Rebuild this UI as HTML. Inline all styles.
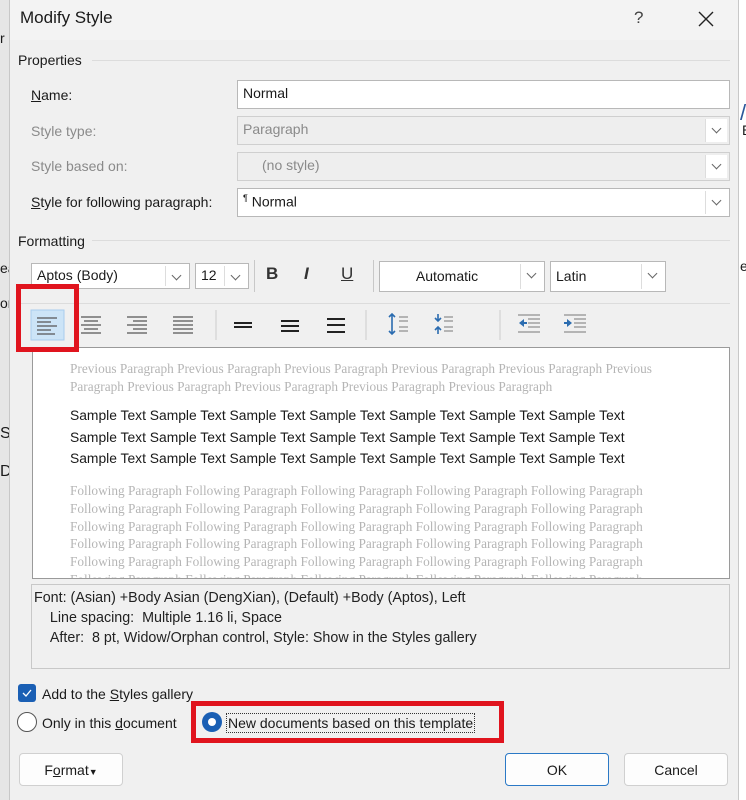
<!DOCTYPE html>
<html><head><style>
*{box-sizing:border-box;margin:0;padding:0}
body{width:746px;height:800px;overflow:hidden;background:#fff;font-family:"Liberation Sans",sans-serif;font-size:14px;color:#1a1a1a;position:relative}
.a{position:absolute}
.dlg{left:9px;top:0;width:730px;height:800px;background:#f0f0f0;border-left:1px solid #c8c8c8;border-right:1px solid #c8c8c8}
.inp{position:absolute;background:#fff;border:1px solid #b8b8b8;height:29px;padding:4px 5px;font-size:14px}
.dis{background:#eeeeee;color:#8a8a8a;border-color:#cfcfcf}
.dd{position:absolute;right:2px;top:2px;width:22px;height:23px;background:#fff;border-left:1px solid #ddd}
.dd:after{content:"";position:absolute;left:7px;top:6px;width:6px;height:6px;border-right:1px solid #666;border-bottom:1px solid #666;transform:rotate(45deg)}
.lbl{position:absolute;font-size:14px}
.g{color:#8a8a8a}
.sep{position:absolute;height:1px;background:#dcdcdc}
.vs{position:absolute;width:1px;background:#c8c8c8}
.btn{position:absolute;background:#fdfdfd;border:1px solid #d0d0d0;border-radius:4px;text-align:center;font-size:14px}
.pv{font-family:"Liberation Serif",serif;font-size:13.3px;color:#b5b5b5;white-space:nowrap;line-height:17.8px}
.st{font-size:13.85px;color:#1a1a1a;white-space:nowrap;line-height:21.5px}
</style></head><body>
<div class="a" style="left:0;top:0;width:9px;height:800px;background:#e6e6e6"></div>
<div class="a" style="left:0;top:30px;font-size:14px">r</div>
<div class="a" style="left:0;top:260px;font-size:14px">ea</div>
<div class="a" style="left:0;top:295px;font-size:14px">or</div>
<div class="a" style="left:0;top:425px;font-size:16px">S</div>
<div class="a" style="left:0;top:463px;font-size:16px">D</div>
<div class="a" style="left:740px;top:100px;font-size:22px;color:#2b579a">/</div>
<div class="a" style="left:742px;top:122px;font-size:14px">E</div>
<div class="a" style="left:740px;top:258px;font-size:14px">e</div>
<div class="a dlg"></div>
<div class="a" style="left:10px;top:0;width:728px;height:40px;background:#f3f3f3"></div>
<div class="a" style="left:20px;top:8px;font-size:17px">Modify Style</div>
<div class="a" style="left:634px;top:8px;font-size:17px;color:#444">?</div>
<svg class="a" style="left:697px;top:10px" width="18" height="18"><path d="M2 2L16 16M16 2L2 16" stroke="#222" stroke-width="1.4"/></svg>
<div class="lbl" style="left:18px;top:52px">Properties</div>
<div class="sep" style="left:92px;top:60px;width:638px"></div>
<div class="lbl" style="left:31px;top:87px"><u>N</u>ame:</div>
<div class="inp" style="left:237px;top:80px;width:493px">Normal</div>
<div class="lbl g" style="left:31px;top:123px">Style type:</div>
<div class="inp dis" style="left:237px;top:116px;width:493px">Paragraph<span class="dd"></span></div>
<div class="lbl g" style="left:31px;top:158px">Style based on:</div>
<div class="inp dis" style="left:237px;top:152px;width:493px;padding-left:24px">(no style)<span class="dd"></span></div>
<div class="lbl" style="left:31px;top:194px"><u>S</u>tyle for following paragraph:</div>
<div class="inp" style="left:237px;top:188px;width:493px"><sup style="font-size:9px">¶</sup> Normal<span class="dd"></span></div>
<div class="lbl" style="left:18px;top:233px">Formatting</div>
<div class="sep" style="left:92px;top:240px;width:638px"></div>
<div class="inp" style="left:31px;top:263px;width:159px;height:26px;padding:3px 5px">Aptos (Body)<span class="dd" style="height:20px"></span></div>
<div class="inp" style="left:195px;top:263px;width:54px;height:26px;padding:3px 5px">12<span class="dd" style="height:20px"></span></div>
<div class="vs" style="left:254px;top:260px;height:32px"></div>
<div class="a" style="left:266px;top:264px;font-size:17px;font-weight:bold;color:#333">B</div>
<div class="a" style="left:304px;top:264px;font-size:17px;font-style:italic;font-weight:bold;color:#333">I</div>
<div class="a" style="left:341px;top:264px;font-size:17px;text-decoration:underline;color:#333">U</div>
<div class="vs" style="left:373px;top:260px;height:32px"></div>
<div class="inp" style="left:379px;top:261px;width:166px;height:31px;text-align:center;padding:6px 30px 0 0">Automatic<span class="dd" style="height:25px"></span></div>
<div class="inp" style="left:550px;top:261px;width:116px;height:31px;padding:6px 5px 0">Latin<span class="dd" style="height:25px"></span></div>
<div class="sep" style="left:18px;top:303px;width:712px"></div>
<svg class="a" style="left:0;top:300px" width="746" height="50">
<rect x="31" y="10" width="33" height="30" fill="#cce4f7" stroke="#a8cdee"/>
<g stroke="#555" stroke-width="1.2">
<path d="M37 18h20M37 22h14M37 26h20M37 30h14M37 34h18"/>
<path d="M81 17h20M84 21h14M81 25h20M84 29h14M81 33h20"/>
<path d="M127 17h20M133 21h14M127 25h20M133 29h14M127 33h20"/>
<path d="M173 17h20M173 21h20M173 25h20M173 29h20M173 33h20"/>
</g>
<path d="M216 10v30" stroke="#ccc"/>
<g stroke="#222" stroke-width="2"><path d="M234 23h18M234 27h18"/><path d="M281 21h18M281 26h18M281 31h18"/><path d="M327 19h18M327 25h18M327 32h18"/></g>
<path d="M366 10v30" stroke="#ccc"/>
<g stroke="#2b6cb0" stroke-width="1.6" fill="none"><path d="M392 14v20M389 17l3-3 3 3M389 31l3 3 3-3"/><path d="M438 14v7M435 18l3 3 3-3M438 27v7M435 30l3-3 3 3"/></g>
<g stroke="#777" stroke-width="1"><path d="M399 17h9M399 21h9M399 27h9M399 31h9M444 17h9M444 21h9M444 27h9M444 31h9"/></g>
<path d="M500 10v30" stroke="#ccc"/>
<g stroke="#777" stroke-width="1"><path d="M518 15h22M528 19h12M528 23h12M528 27h12M518 32h22M564 15h22M574 19h12M574 23h12M574 27h12M564 32h22"/></g>
<g fill="#2b6cb0"><path d="M519 23l5-4v8z"/><rect x="522" y="22" width="5" height="2"/><path d="M572 23l-5-4v8z"/><rect x="564" y="22" width="5" height="2"/></g>
</svg>
<div class="a" style="left:32px;top:347px;width:698px;height:232px;background:#fff;border:1px solid #9a9a9a;overflow:hidden">
<div class="a pv" style="left:37px;top:12px">Previous Paragraph Previous Paragraph Previous Paragraph Previous Paragraph Previous Paragraph Previous<br>Paragraph Previous Paragraph Previous Paragraph Previous Paragraph Previous Paragraph</div>
<div class="a st" style="left:37px;top:57px">Sample Text Sample Text Sample Text Sample Text Sample Text Sample Text Sample Text<br>Sample Text Sample Text Sample Text Sample Text Sample Text Sample Text Sample Text<br>Sample Text Sample Text Sample Text Sample Text Sample Text Sample Text Sample Text</div>
<div class="a pv" style="left:37px;top:134px">Following Paragraph Following Paragraph Following Paragraph Following Paragraph Following Paragraph<br>Following Paragraph Following Paragraph Following Paragraph Following Paragraph Following Paragraph<br>Following Paragraph Following Paragraph Following Paragraph Following Paragraph Following Paragraph<br>Following Paragraph Following Paragraph Following Paragraph Following Paragraph Following Paragraph<br>Following Paragraph Following Paragraph Following Paragraph Following Paragraph Following Paragraph<br>Following Paragraph Following Paragraph Following Paragraph Following Paragraph Following Paragraph</div>
</div>
<div class="a" style="left:16px;top:284px;width:63px;height:68px;border:5px solid #e0141e"></div>
<div class="a" style="left:31px;top:584px;width:699px;height:85px;border:1px solid #c8c8c8;background:#f0f0f0;padding:3px 2px;font-size:14.3px;line-height:20px;color:#222">Font: (Asian) +Body Asian (DengXian), (Default) +Body (Aptos), Left<br>&nbsp;&nbsp;&nbsp;&nbsp;Line spacing:&nbsp; Multiple 1.16 li, Space<br>&nbsp;&nbsp;&nbsp;&nbsp;After:&nbsp; 8 pt, Widow/Orphan control, Style: Show in the Styles gallery</div>
<div class="a" style="left:18px;top:684px;width:18px;height:18px;background:#1a5fb4;border-radius:3px"></div>
<svg class="a" style="left:18px;top:684px" width="18" height="18"><path d="M5 9l3 3 5-6" stroke="#fff" stroke-width="1.3" fill="none"/></svg>
<div class="lbl" style="left:42px;top:686px">Add to the <u>S</u>tyles gallery</div>
<div class="a" style="left:17px;top:712px;width:20px;height:20px;border:1px solid #555;border-radius:50%;background:#fff"></div>
<div class="lbl" style="left:42px;top:715px">Only in this <u>d</u>ocument</div>
<div class="a" style="left:191px;top:701px;width:313px;height:42px;border:5px solid #e0141e"></div>
<div class="a" style="left:202px;top:712px;width:20px;height:20px;border-radius:50%;background:#1a5fb4"></div>
<div class="a" style="left:208px;top:718px;width:8px;height:8px;border-radius:50%;background:#fff"></div>
<div class="lbl" style="left:226px;top:713px;border:1px dotted #333;padding:0 1px;line-height:18px">New documents based on this template</div>
<div class="btn" style="left:19px;top:753px;width:104px;height:33px;padding-top:8px">F<u>o</u>rmat<span style="font-size:9px">▼</span></div>
<div class="btn" style="left:505px;top:753px;width:104px;height:33px;padding-top:8px;border:1px solid #2b79c6">OK</div>
<div class="btn" style="left:624px;top:753px;width:104px;height:33px;padding-top:8px">Cancel</div>
</body></html>
